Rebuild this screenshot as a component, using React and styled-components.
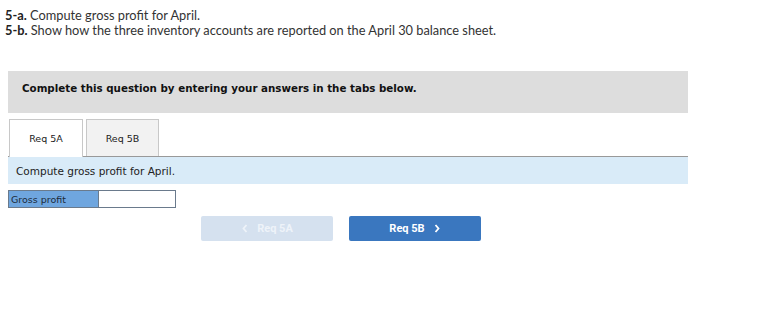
import React from 'react'
import styled, { createGlobalStyle } from 'styled-components'

const GlobalStyle = createGlobalStyle`
  body {
    margin: 0;
    background: #ffffff;
    font-family: Lato, "Liberation Sans", sans-serif;
  }
`

const Page = styled.div`
  width: 776px;
  height: 312px;
  padding: 8px 0 0 0;
  box-sizing: border-box;
`

const Intro = styled.div`
  padding-left: 5px;
  font-size: 12.8px;
  line-height: 15px;
  color: #333333;
`

const Part = styled.div`
  b {
    font-weight: 700;
    color: #222222;
  }
`

const Panel = styled.div`
  margin: 0 0 0 8px;
  width: 680px;
`

const Banner = styled.div`
  margin-top: 33px;
  height: 42px;
  box-sizing: border-box;
  background: #dddddd;
  padding: 11px 0 0 14px;
  font-family: "DejaVu Sans", Verdana, sans-serif;
  font-size: 10.3px;
  line-height: 13px;
  font-weight: 700;
  color: #111111;
`

const Tabs = styled.div`
  display: flex;
  gap: 3px;
  margin-top: 6px;
  padding-left: 1px;
  border-bottom: 1px solid #999999;
`

const Tab = styled.div`
  width: ${(p) => (p.$active ? '74px' : '73px')};
  height: ${(p) => (p.$active ? '38px' : '37px')};
  margin-bottom: ${(p) => (p.$active ? '-1px' : '0')};
  box-sizing: border-box;
  border: 1px solid #c8c8c8;
  border-bottom: none;
  background: ${(p) => (p.$active ? '#ffffff' : '#f2f2f2')};
  display: flex;
  align-items: center;
  justify-content: center;
  font-family: "DejaVu Sans", Verdana, sans-serif;
  font-size: 9.5px;
  color: #222222;
`

const Prompt = styled.div`
  height: 27px;
  background: #d9ebf8;
  display: flex;
  align-items: center;
  padding-left: 8px;
  font-family: "DejaVu Sans", Verdana, sans-serif;
  font-size: 10.5px;
  color: #222222;
`

const AnswerRow = styled.div`
  display: flex;
  margin-top: 6px;
  width: 168px;
  height: 18px;
  border: 1px solid #6a7a8c;
  box-sizing: border-box;
`

const Label = styled.div`
  width: 90px;
  background: #6fa6df;
  font-family: "DejaVu Sans", Verdana, sans-serif;
  font-size: 9.5px;
  color: #1c2a3a;
  display: flex;
  align-items: center;
  padding-left: 2px;
  box-sizing: border-box;
  border-right: 1px solid #6a7a8c;
`

const Field = styled.input`
  flex: 1;
  min-width: 0;
  border: none;
  outline: none;
  padding: 0;
  background: #ffffff;
`

const Nav = styled.div`
  display: flex;
  gap: 16px;
  margin: 8px 0 0 193px;
`

const NavButton = styled.div`
  width: 132px;
  height: 25px;
  border-radius: 2px;
  background: ${(p) => (p.$disabled ? '#d5e1ef' : '#3a77bf')};
  color: ${(p) => (p.$disabled ? '#eef3f9' : '#ffffff')};
  display: flex;
  align-items: center;
  justify-content: center;
  gap: 8px;
  font-family: Roboto, "Liberation Sans", sans-serif;
  font-size: 11px;
  font-weight: 700;
  svg {
    display: block;
  }
`

const Chevron = ({ dir }) => (
  <svg width="8" height="9" viewBox="0 0 8 9">
    <path
      d={dir === 'left' ? 'M5.5 1 L2.5 4.5 L5.5 8' : 'M2.5 1 L5.5 4.5 L2.5 8'}
      fill="none"
      stroke="currentColor"
      strokeWidth="1.8"
    />
  </svg>
)

export default function App() {
  return (
    <Page>
      <GlobalStyle />
      <Intro>
        <Part>
          <b>5-a.</b> Compute gross profit for April.
        </Part>
        <Part>
          <b>5-b.</b> Show how the three inventory accounts are reported on the April 30 balance sheet.
        </Part>
      </Intro>
      <Panel>
        <Banner>Complete this question by entering your answers in the tabs below.</Banner>
        <Tabs>
          <Tab $active>Req 5A</Tab>
          <Tab>Req 5B</Tab>
        </Tabs>
        <Prompt>Compute gross profit for April.</Prompt>
        <AnswerRow>
          <Label>Gross profit</Label>
          <Field aria-label="Gross profit" />
        </AnswerRow>
        <Nav>
          <NavButton $disabled>
            <Chevron dir="left" />
            Req 5A
          </NavButton>
          <NavButton>
            Req 5B
            <Chevron dir="right" />
          </NavButton>
        </Nav>
      </Panel>
    </Page>
  )
}
